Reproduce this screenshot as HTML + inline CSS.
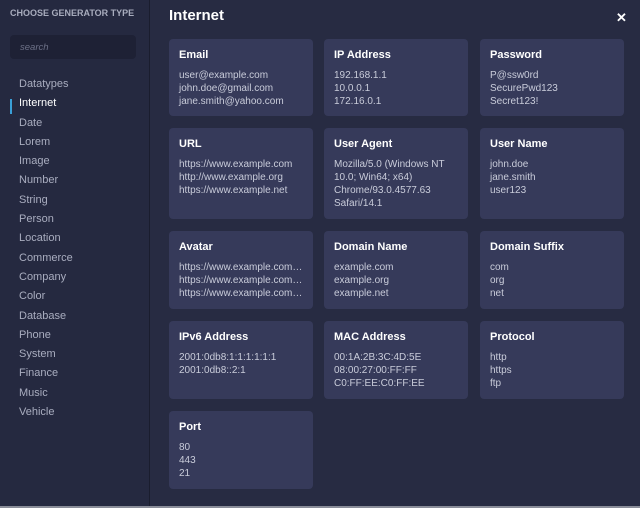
<!DOCTYPE html><html><head><style>
*{margin:0;padding:0;box-sizing:border-box}
body{width:640px;height:508px;background:#272b42;font-family:"Liberation Sans",sans-serif;position:relative;overflow:hidden}
.side{position:absolute;left:0;top:0;width:150px;height:506px;background:#252940;border-right:1px solid #1a1d2e}
.hd{position:absolute;left:10px;top:8px;font-size:9px;font-weight:bold;color:#a8acbd}
.search{position:absolute;left:10px;top:35px;width:126px;height:24px;background:#1e2135;border-radius:4px;color:#6d7188;font-size:9.5px;font-style:italic;padding:7px 10px}
.nav{position:absolute;left:19px;top:75px;font-size:11px;color:#a9adbf;line-height:19.3px}
.nav .act{color:#fff;position:relative}
.nav .act:before{content:"";position:absolute;left:-9px;top:2px;width:2px;height:15px;background:#3aa0d8}
h1{position:absolute;left:169px;top:7px;font-size:15px;color:#fff;font-weight:bold}
.x{position:absolute;left:616px;top:10px;color:#fff;font-size:13px;font-weight:bold}
.c{position:absolute;width:144px;background:#363a5a;border-radius:4px;padding:10px 10px;color:#c9ccda;font-size:10px;line-height:13px}
.c b{display:block;color:#fff;font-size:11px;margin-bottom:8px;line-height:12px}
.bot{position:absolute;left:0;top:506px;width:640px;height:2px;background:#8a8d99}
</style></head><body>
<div class="side"><div class="hd">CHOOSE GENERATOR TYPE</div><div class="search">search</div>
<div class="nav">Datatypes<br><span class="act">Internet</span><br>Date<br>Lorem<br>Image<br>Number<br>String<br>Person<br>Location<br>Commerce<br>Company<br>Color<br>Database<br>Phone<br>System<br>Finance<br>Music<br>Vehicle</div></div>
<h1>Internet</h1><div class="x">✕</div>
<div class="c" style="left:169px;top:39px;height:77px"><b>Email</b>user@example.com<br>john.doe@gmail.com<br>jane.smith@yahoo.com</div>
<div class="c" style="left:324px;top:39px;height:77px"><b>IP Address</b>192.168.1.1<br>10.0.0.1<br>172.16.0.1</div>
<div class="c" style="left:480px;top:39px;height:77px"><b>Password</b>P@ssw0rd<br>SecurePwd123<br>Secret123!</div>
<div class="c" style="left:169px;top:128px;height:91px"><b>URL</b>https://www.example.com<br>http://www.example.org<br>https://www.example.net</div>
<div class="c" style="left:324px;top:128px;height:91px"><b>User Agent</b>Mozilla/5.0 (Windows NT 10.0; Win64; x64) Chrome/93.0.4577.63 Safari/14.1</div>
<div class="c" style="left:480px;top:128px;height:91px"><b>User Name</b>john.doe<br>jane.smith<br>user123</div>
<div class="c" style="left:169px;top:231px;height:78px;white-space:nowrap;overflow:hidden"><b>Avatar</b>https://www.example.com…<br>https://www.example.com…<br>https://www.example.com…</div>
<div class="c" style="left:324px;top:231px;height:78px"><b>Domain Name</b>example.com<br>example.org<br>example.net</div>
<div class="c" style="left:480px;top:231px;height:78px"><b>Domain Suffix</b>com<br>org<br>net</div>
<div class="c" style="left:169px;top:321px;height:78px"><b>IPv6 Address</b>2001:0db8:1:1:1:1:1:1<br>2001:0db8::2:1</div>
<div class="c" style="left:324px;top:321px;height:78px"><b>MAC Address</b>00:1A:2B:3C:4D:5E<br>08:00:27:00:FF:FF<br>C0:FF:EE:C0:FF:EE</div>
<div class="c" style="left:480px;top:321px;height:78px"><b>Protocol</b>http<br>https<br>ftp</div>
<div class="c" style="left:169px;top:411px;height:78px"><b>Port</b>80<br>443<br>21</div>
<div class="bot"></div>
</body></html>
